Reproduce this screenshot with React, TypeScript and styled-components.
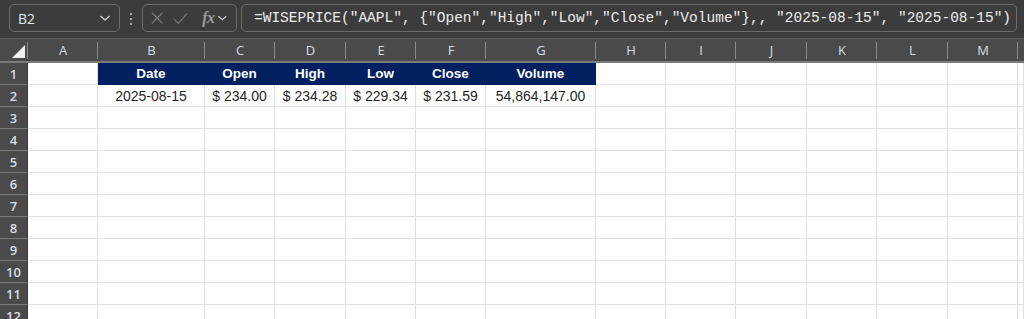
import React from 'react';
import styled, { createGlobalStyle } from 'styled-components';

const GlobalStyle = createGlobalStyle`
    html, body {
        margin: 0;
        padding: 0;
        background: #ffffff;
        overflow: hidden;
    }
    #root {
        width: 1024px;
        height: 319px;
        overflow: hidden;
    }
`;

const COLS = [70, 107, 70, 71, 70, 70, 110, 70, 70, 71, 70, 71, 70];
const LETTERS = ['A', 'B', 'C', 'D', 'E', 'F', 'G', 'H', 'I', 'J', 'K', 'L', 'M', 'N'];
const ROW_COUNT = 12;

const HEADERS = ['Date', 'Open', 'High', 'Low', 'Close', 'Volume'];
const VALUES = ['2025-08-15', '$ 234.00', '$ 234.28', '$ 229.34', '$ 231.59', '54,864,147.00'];

const Sheet = styled.div`
    display: flex;
    flex-direction: column;
    width: 1024px;
`;

const FormulaBar = styled.div`
    display: flex;
    align-items: flex-start;
    height: 38px;
    padding: 4px 0 0 9px;
    box-sizing: border-box;
    background: #3c3c3c;
`;

const Box = styled.div<{ $width?: number }>`
    display: flex;
    align-items: center;
    height: 28px;
    box-sizing: border-box;
    border: 1px solid #6b6b6b;
    border-radius: 5px;
    ${(p) => (p.$width ? `width: ${p.$width}px;` : 'flex: 1;')}
`;

const NameText = styled.span`
    flex: 1;
    padding-left: 8px;
    font-family: 'Open Sans', 'Noto Sans', sans-serif;
    font-size: 14px;
    color: #dfe8f5;
`;

const Kebab = styled.div`
    display: flex;
    flex-direction: column;
    align-items: center;
    align-self: center;
    margin-top: -4px;
    gap: 3px;
    width: 22px;
    span {
        width: 2px;
        height: 2px;
        background: #c8c8c8;
        border-radius: 1px;
    }
`;

const FxText = styled.span`
    font-family: 'Liberation Serif', serif;
    font-style: italic;
    font-weight: bold;
    font-size: 16px;
    color: #9a9a9a;
    margin-left: 14px;
    letter-spacing: -0.5px;
`;

const FormulaText = styled.span`
    padding-left: 12px;
    font-family: 'Liberation Mono', monospace;
    font-size: 14.5px;
    color: #ececec;
    white-space: nowrap;
    overflow: hidden;
`;

const Spacer = styled.div`
    width: 4px;
`;

const Grid = styled.div`
    display: grid;
    grid-template-columns: 28px ${COLS.map((c) => `${c}px`).join(' ')} 1fr;
    grid-template-rows: 25px repeat(${ROW_COUNT}, 22px);
`;

const Corner = styled.div`
    background: #4a4a4a;
    border-top: 1px solid #5a5a5a;
    border-bottom: 2px solid #7c7c7c;
    position: relative;
    &::after {
        content: '';
        position: absolute;
        right: 3px;
        bottom: 3px;
        border-left: 13px solid transparent;
        border-bottom: 13px solid #f0f0f0;
    }
`;

const ColHead = styled.div`
    display: flex;
    align-items: center;
    justify-content: center;
    background: #4a4a4a;
    border-top: 1px solid #5a5a5a;
    border-bottom: 2px solid #7c7c7c;
    font-family: 'Open Sans', 'Noto Sans', sans-serif;
    font-size: 13px;
    color: #d8dde4;
    position: relative;
    &::before {
        content: '';
        position: absolute;
        left: -1px;
        top: 3px;
        bottom: 2px;
        width: 1px;
        background: #8a8a8a;
    }
`;

const RowHead = styled.div`
    display: flex;
    align-items: center;
    justify-content: center;
    background: #4a4a4a;
    border-bottom: 1px solid #7a7a7a;
    border-right: 1px solid #3a3a3a;
    font-family: 'Open Sans', 'Noto Sans', sans-serif;
    font-size: 13px;
    font-weight: 600;
    color: #d8dde4;
`;

const Cell = styled.div<{ $head?: boolean }>`
    display: flex;
    align-items: center;
    justify-content: center;
    box-sizing: border-box;
    border-right: 1px solid #e0e0e0;
    border-bottom: 1px solid #e0e0e0;
    font-family: 'Liberation Sans', Arial, sans-serif;
    font-size: 14px;
    color: #1f1f1f;
    white-space: nowrap;
    ${(p) =>
        p.$head &&
        `
        background: #002060;
        border-color: #002060;
        color: #ffffff;
        font-weight: bold;
        font-size: 13.5px;
    `}
`;

const Chevron = ({ left }: { left?: number }) => (
    <svg width="12" height="8" viewBox="0 0 12 8" style={{ marginRight: 8, marginLeft: left }}>
        <path d="M1.5 2 L6 6 L10.5 2" fill="none" stroke="#c8c8c8" strokeWidth="1.4" />
    </svg>
);

const App: React.FC = () => {
    const rows = [];
    for (let r = 1; r <= ROW_COUNT; r++) {
        rows.push(<RowHead key={`rh${r}`}>{r}</RowHead>);
        for (let c = 0; c < LETTERS.length; c++) {
            const idx = c - 1;
            if (r === 1 && idx >= 0 && idx < HEADERS.length) {
                rows.push(
                    <Cell key={`c${r}-${c}`} $head>
                        {HEADERS[idx]}
                    </Cell>
                );
            } else if (r === 2 && idx >= 0 && idx < VALUES.length) {
                rows.push(<Cell key={`c${r}-${c}`}>{VALUES[idx]}</Cell>);
            } else {
                rows.push(<Cell key={`c${r}-${c}`} />);
            }
        }
    }

    return (
        <Sheet>
            <GlobalStyle />
            <FormulaBar>
                <Box $width={111}>
                    <NameText>B2</NameText>
                    <Chevron />
                </Box>
                <Kebab>
                    <span />
                    <span />
                    <span />
                </Kebab>
                <Box $width={95}>
                    <svg width="14" height="14" viewBox="0 0 14 14" style={{ marginLeft: 8 }}>
                        <path d="M1 1 L13 13 M13 1 L1 13" stroke="#7c7c7c" strokeWidth="1.3" />
                    </svg>
                    <svg width="17" height="13" viewBox="0 0 17 13" style={{ marginLeft: 10 }}>
                        <path d="M1 7 L6 12 L16 1" fill="none" stroke="#7c7c7c" strokeWidth="1.3" />
                    </svg>
                    <FxText>fx</FxText>
                    <Chevron left={3} />
                </Box>
                <Spacer />
                <Box style={{ marginRight: 7 }}>
                    <FormulaText>
                        =WISEPRICE("AAPL", {'{'}"Open","High","Low","Close","Volume"{'}'},, "2025-08-15", "2025-08-15")
                    </FormulaText>
                </Box>
            </FormulaBar>
            <Grid>
                <Corner />
                {LETTERS.map((l) => (
                    <ColHead key={l}>{l === 'N' ? '' : l}</ColHead>
                ))}
                {rows}
            </Grid>
        </Sheet>
    );
};

export default App;
